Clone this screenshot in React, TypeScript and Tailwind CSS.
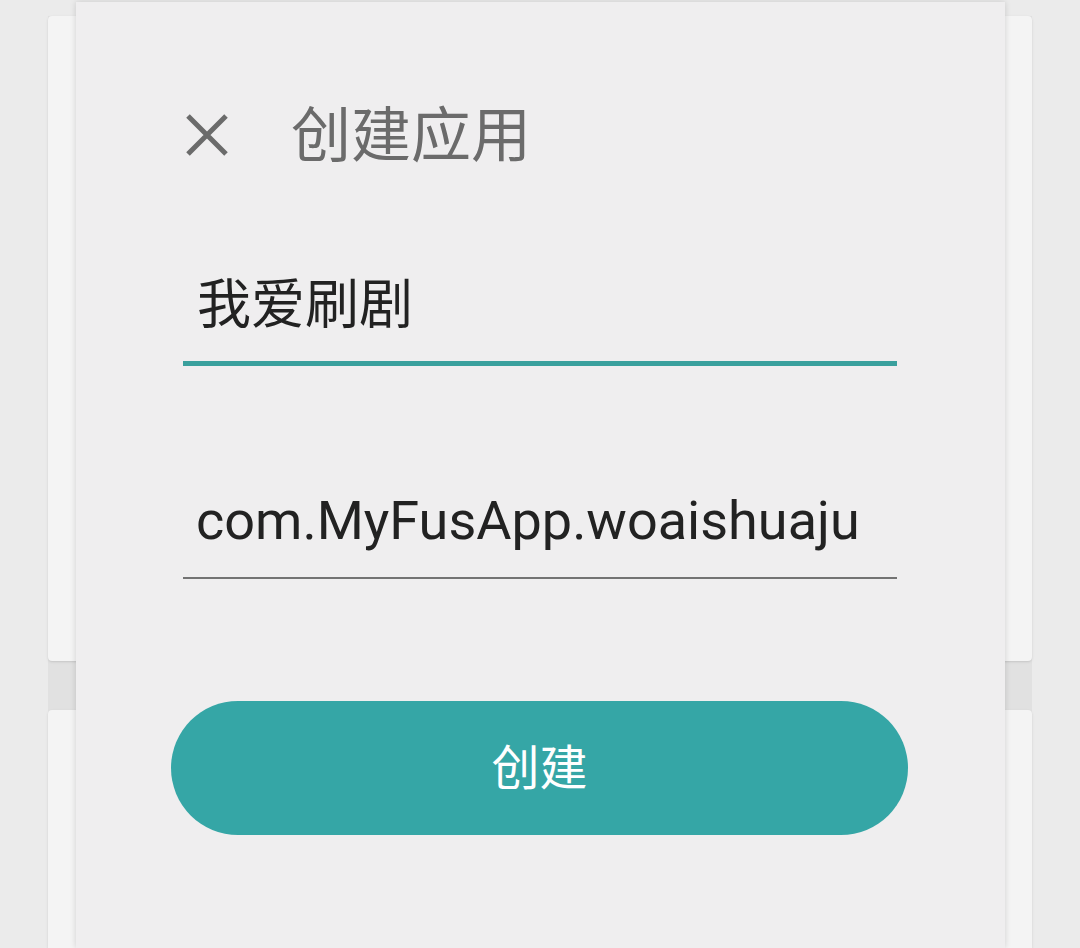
import React from "react";

export default function App() {
  return (
    <div className="relative w-[1080px] h-[948px] overflow-hidden bg-[#ebebeb]">
      {/* background list */}
      <div className="flex flex-col pt-[16px] px-[48px] h-full">
        <div className="flex flex-col bg-[#e1e1e1] h-full">
          <div className="h-[645px] bg-[#f4f4f4] rounded-t-[4px] rounded-b-[4px] shadow-sm" />
          <div className="h-[49px]" />
          <div className="flex-1 bg-[#f4f4f4] rounded-t-[4px] shadow-sm" />
        </div>
      </div>

      {/* dialog */}
      <div className="absolute left-[76px] top-[2px] w-[929px] h-[946px] bg-[#efeeef] shadow-[0_0_6px_rgba(0,0,0,0.15)] flex flex-col">
        <div className="mt-[103px] h-[60px] flex items-center pl-[110px]">
          <svg width="42" height="42" viewBox="0 0 42 42" className="shrink-0">
            <path d="M2 2 L40 40 M40 2 L2 40" stroke="#6b6b6b" strokeWidth="5" strokeLinecap="butt" />
          </svg>
          <span
            className="ml-[63px] text-[60px] leading-[60px] text-[#6b6b6b] -translate-y-[4px]"
            style={{ fontFamily: '"Noto Sans CJK SC", sans-serif' }}
          >
            创建应用
          </span>
        </div>

        <div className="ml-[107px] w-[714px] mt-[100px] flex flex-col">
          <div
            className="h-[80px] leading-[80px] pl-[14px] text-[54px] text-[#222222] -translate-y-[4px]"
            style={{ fontFamily: '"Noto Sans CJK SC", sans-serif' }}
          >
            我爱刷剧
          </div>
          <div className="mt-[16px] h-[5px] bg-[#3aa09d]" />
        </div>

        <div className="ml-[107px] w-[714px] mt-[117px] flex flex-col">
          <div
            className="h-[80px] leading-[80px] pl-[13px] text-[54px] text-[#222222] whitespace-nowrap -translate-y-[2px]"
            style={{ fontFamily: 'Roboto, "Noto Sans CJK SC", sans-serif' }}
          >
            com.MyFusApp.woaishuaju
          </div>
          <div className="mt-[14px] h-[2px] bg-[#737373]" />
        </div>

        <div className="ml-[95px] w-[737px] mt-[122px] h-[134px] rounded-full bg-[#35a6a6] flex items-center justify-center">
          <span
            className="text-[48px] text-white leading-none -translate-y-[4px]"
            style={{ fontFamily: '"Noto Sans CJK SC", sans-serif' }}
          >
            创建
          </span>
        </div>
      </div>
    </div>
  );
}
